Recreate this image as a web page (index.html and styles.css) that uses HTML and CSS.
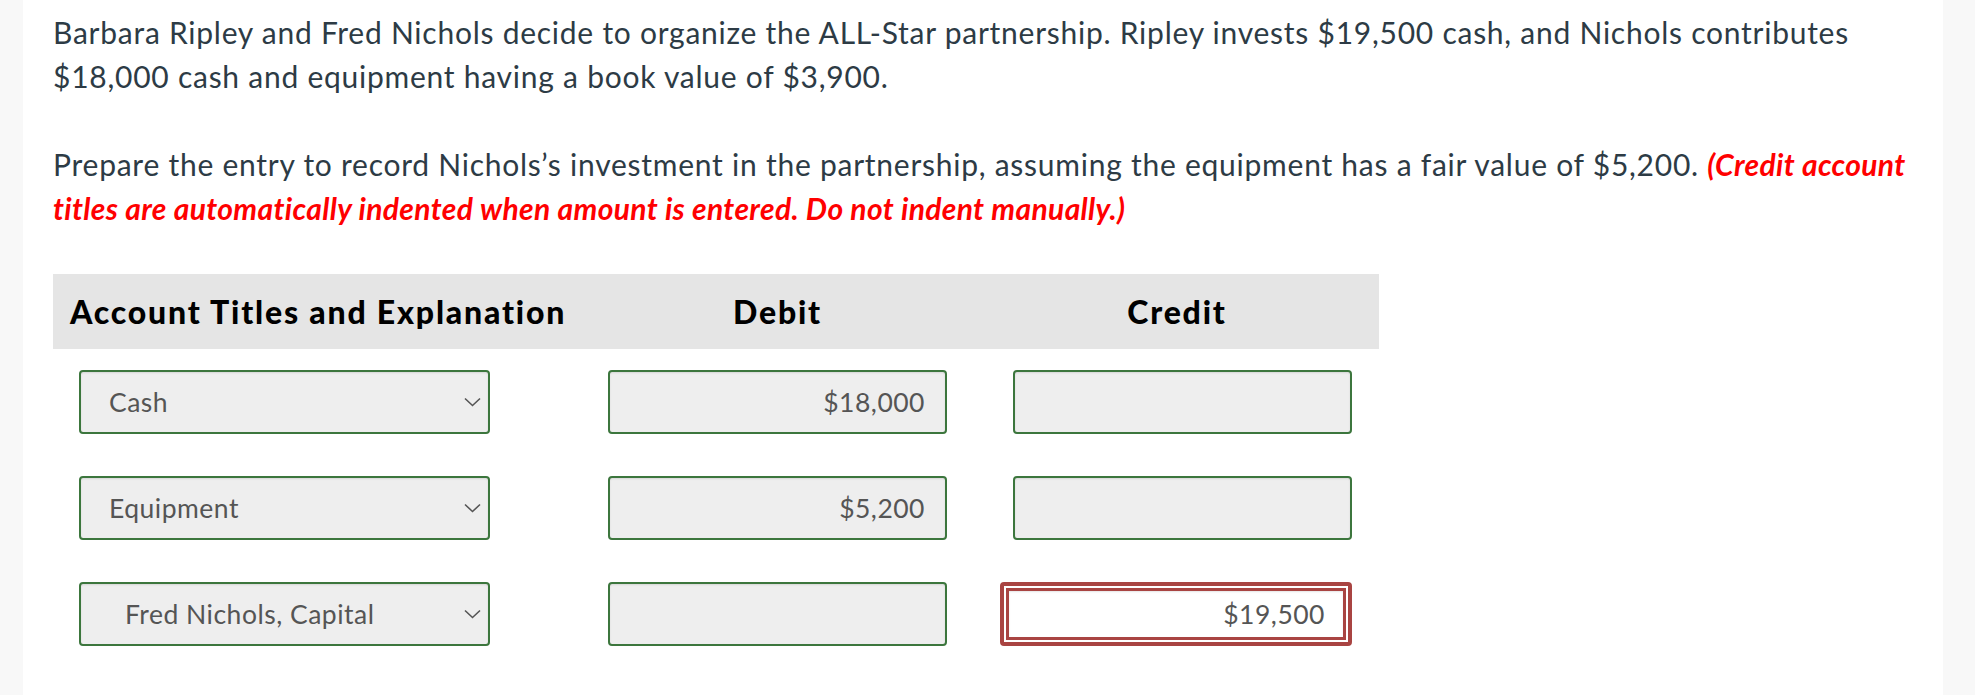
FILE: index.html
```html
<!DOCTYPE html>
<html lang="en">
<head>
    <meta charset="UTF-8">
    <title>Journal Entry</title>
    <link rel="stylesheet" href="styles.css">
</head>
<body>
    <div class="gutter gutter-left"></div>

    <main class="question">
        <p>Barbara Ripley and Fred Nichols decide to organize the ALL-Star partnership. Ripley invests $19,500 cash, and Nichols contributes $18,000 cash and equipment having a book value of $3,900.</p>

        <p>Prepare the entry to record Nichols’s investment in the partnership, assuming the equipment has a fair value of $5,200. <span class="note">(Credit account titles are automatically indented when amount is entered. Do not indent manually.)</span></p>

        <div class="journal">
            <div class="journal-head">
                <div class="head-account">Account Titles and Explanation</div>
                <div class="head-debit">Debit</div>
                <div class="head-credit">Credit</div>
            </div>

            <div class="journal-row">
                <div class="field select">
                    <span>Cash</span>
                    <svg class="chevron" width="17" height="10" viewBox="0 0 17 10"><path d="M1 1.5 L8.5 8.5 L16 1.5" fill="none" stroke="#555" stroke-width="1.6"/></svg>
                </div>
                <div class="field amount">$18,000</div>
                <div class="field amount"></div>
            </div>

            <div class="journal-row">
                <div class="field select">
                    <span>Equipment</span>
                    <svg class="chevron" width="17" height="10" viewBox="0 0 17 10"><path d="M1 1.5 L8.5 8.5 L16 1.5" fill="none" stroke="#555" stroke-width="1.6"/></svg>
                </div>
                <div class="field amount">$5,200</div>
                <div class="field amount"></div>
            </div>

            <div class="journal-row">
                <div class="field select indented">
                    <span>Fred Nichols, Capital</span>
                    <svg class="chevron" width="17" height="10" viewBox="0 0 17 10"><path d="M1 1.5 L8.5 8.5 L16 1.5" fill="none" stroke="#555" stroke-width="1.6"/></svg>
                </div>
                <div class="field amount"></div>
                <div class="error-wrap">
                    <div class="field amount error">$19,500</div>
                </div>
            </div>
        </div>
    </main>

    <div class="gutter gutter-right"></div>
</body>
</html>
```

FILE: styles.css
```css
/* General Styles */
body {
    margin: 0;
    padding: 0;
    display: flex;
    min-height: 695px;
    background: #ffffff;
    font-family: Lato, "Open Sans", sans-serif;
    color: #2d3b45;
}

.gutter {
    background: #f8f8f8;
}

.gutter-left {
    width: 23px;
}

.gutter-right {
    width: 32px;
}

.question {
    flex: 1;
    padding: 10px 15px 0 30px;
}

.question p {
    margin: 0 0 44px;
    font-size: 30px;
    line-height: 44px;
    letter-spacing: 0.75px;
}

.note {
    color: #ff0000;
    font-weight: bold;
    font-style: italic;
    letter-spacing: 0.35px;
}

/* Journal table */
.journal {
    width: 1326px;
}

.journal-head {
    display: grid;
    grid-template-columns: 538px 339px 405px;
    align-items: center;
    height: 75px;
    padding-left: 17px;
    background: #e5e5e5;
    color: #000;
    font-weight: 900;
    font-size: 32px;
    letter-spacing: 1.8px;
}

.head-debit,
.head-credit {
    text-align: center;
}

.head-credit {
    padding-left: 55px;
}

.journal-row {
    display: grid;
    grid-template-columns: 529px 392px 352px;
    align-items: center;
    padding: 21px 27px 21px 26px;
}

.field {
    box-sizing: border-box;
    height: 64px;
    border: 2px solid #3c763d;
    border-radius: 4px;
    background: #eeeeee;
    box-shadow: inset 0 1px 2px rgba(0, 0, 0, 0.1);
    color: #555555;
    font-size: 26.5px;
    letter-spacing: 0.5px;
    display: flex;
    align-items: center;
}

.select {
    width: 411px;
    padding: 0 7px 0 28px;
    justify-content: space-between;
}

.select.indented {
    padding-left: 44px;
}

.amount {
    width: 339px;
    padding: 0 20px;
    justify-content: flex-end;
}

.journal-row > .amount:last-child {
    margin-left: 13px;
}

.error-wrap {
    box-sizing: border-box;
    width: 352px;
    height: 64px;
    border: 4px solid #a94442;
    border-radius: 4px;
    padding: 2px;
    background: #fff;
}

.field.error {
    width: 100%;
    height: 100%;
    border: 3px solid #a94442;
    border-radius: 0;
    background: #fff;
    padding-right: 18px;
}
```
